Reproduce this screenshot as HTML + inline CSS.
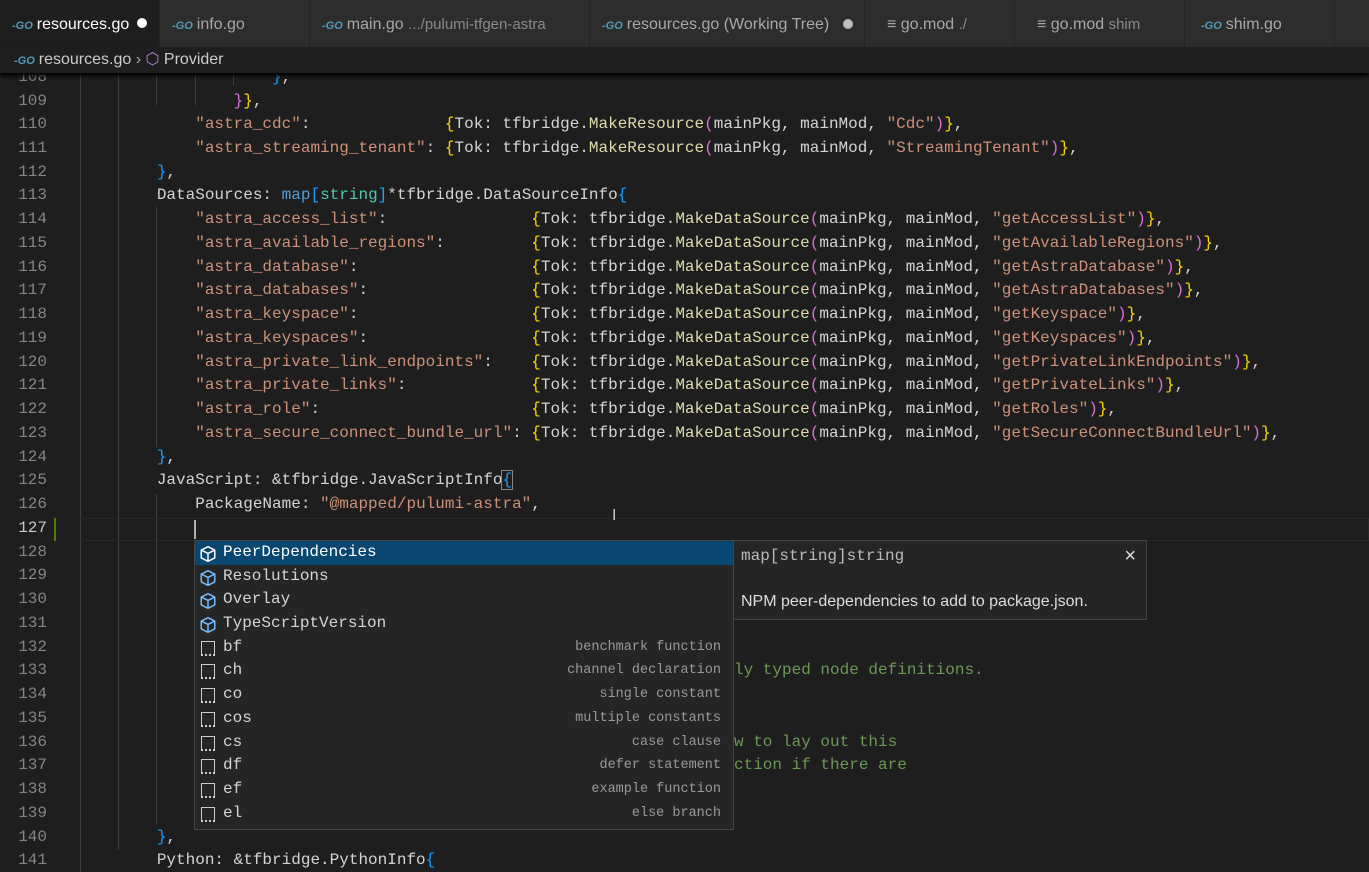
<!DOCTYPE html>
<html><head><meta charset="utf-8"><style>
*{margin:0;padding:0;box-sizing:border-box}
body{width:1369px;height:872px;background:#1e1e1e;overflow:hidden;position:relative;font-family:"Liberation Sans",sans-serif}
.tabs{position:absolute;left:0;top:0;width:1369px;height:47px;background:#252526}
.tab{position:absolute;top:0;height:47px;background:#2d2d2d;border-right:1px solid #252526;color:#a8a8a8;font-size:16px;line-height:50px;padding-left:12px;white-space:nowrap}
.tab.act{background:#1e1e1e;color:#fff}
.go{color:#519aba;font-weight:bold;font-size:11px;font-style:italic;margin-right:4px}
.dim{color:#8a8a8a;font-size:15px}
.bc{position:absolute;left:0;top:47px;width:1369px;height:26px;background:#1e1e1e;color:#ccc;font-size:16px;line-height:26px;padding-left:14px;box-shadow:0 3px 4px #000;z-index:5}
.ln{position:absolute;left:0;width:47px;text-align:right;color:#858585;font-family:"Liberation Mono",monospace;font-size:16px;height:24px;line-height:24px}
.l{position:absolute;left:80px;white-space:pre;color:#d4d4d4;font-family:"Liberation Mono",monospace;font-size:16px;height:24px;line-height:24px;letter-spacing:0}
.s{color:#ce9178}.f{color:#dcdcaa}.k{color:#569cd6}.t{color:#4ec9b0}.c{color:#6a9955}
.b1{color:#ffd700}.b2{color:#da70d6}.b3{color:#179fff}
.g{position:absolute;width:1px;background:#404040}
.sug{position:absolute;left:194px;top:540px;width:540px;height:290px;background:#252526;border:1px solid #454545;z-index:6;font-family:"Liberation Mono",monospace;font-size:16px;color:#d4d4d4}
.row{height:23.7px;line-height:23.7px;position:relative;padding-left:28px}
.row.sel{background:#094771;color:#fff}
.row .d{position:absolute;right:12px;top:0;font-size:13.5px;color:#999}
.ic{position:absolute;left:4px;top:4px}
.sq{position:absolute;left:6px;top:5px;width:14px;height:15px;border:1px solid #ccc;border-bottom:2px dotted #ccc}
.det{position:absolute;left:733px;top:540px;width:414px;height:80px;background:#252526;border:1px solid #454545;z-index:6;color:#ccc}
</style></head><body>
<div class="tabs">
<div class="tab act" style="left:0;width:160px"><span class="go">-GO</span>resources.go <span style="position:absolute;left:137px;top:18px;width:10px;height:10px;border-radius:5px;background:#fff"></span></div>
<div class="tab" style="left:160px;width:150px"><span class="go">-GO</span>info.go</div>
<div class="tab" style="left:310px;width:280px"><span class="go">-GO</span>main.go <span class="dim">.../pulumi-tfgen-astra</span></div>
<div class="tab" style="left:590px;width:275px"><span class="go">-GO</span>resources.go (Working Tree) <span style="position:absolute;left:253px;top:19px;width:10px;height:10px;border-radius:5px;background:#bbb"></span></div>
<div class="tab" style="left:865px;width:150px;padding-left:22px">≡ go.mod <span class="dim">./</span></div>
<div class="tab" style="left:1015px;width:170px;padding-left:22px">≡ go.mod <span class="dim">shim</span></div>
<div class="tab" style="left:1185px;width:150px;padding-left:16px"><span class="go">-GO</span>shim.go</div>
<div class="tab" style="left:1335px;width:40px"></div>
</div>
<div class="bc"><span class="go">-GO</span>resources.go <span style="color:#aaa">›</span> <span style="color:#b180d7">⬡</span> Provider</div>

<div class="g" style="left:80px;top:65px;height:807px"></div>
<div class="g" style="left:118px;top:65px;height:785px"></div>
<div class="g" style="left:156px;top:65px;height:40px"></div>
<div class="g" style="left:195px;top:65px;height:40px"></div>
<div class="g" style="left:233px;top:65px;height:20px"></div>
<div class="g" style="left:156px;top:207px;height:240px"></div>
<div class="g" style="left:156px;top:494px;height:330px"></div>
<div style="position:absolute;left:80px;top:518px;width:1289px;height:23px;border:1px solid #282828;border-left:none"></div>
<div style="position:absolute;left:54px;top:518px;width:2px;height:23px;background:#587c0c"></div>
<div style="position:absolute;left:194px;top:520px;width:2px;height:19px;background:#aeafad"></div>
<div style="position:absolute;left:612px;top:507px;color:#ccc;font-size:16px">I</div>

<div class="ln" style="top:65px">108</div><div class="l" style="top:65px">                    <span class="b3">}</span>,</div>
<div class="ln" style="top:89px">109</div><div class="l" style="top:89px">                <span class="b2">}</span><span class="b1">}</span>,</div>
<div class="ln" style="top:112px">110</div><div class="l" style="top:112px">            <span class="s">"astra_cdc"</span>:              <span class="b1">{</span>Tok: tfbridge.<span class="f">MakeResource</span><span class="b2">(</span>mainPkg, mainMod, <span class="s">"Cdc"</span><span class="b2">)</span><span class="b1">}</span>,</div>
<div class="ln" style="top:136px">111</div><div class="l" style="top:136px">            <span class="s">"astra_streaming_tenant"</span>: <span class="b1">{</span>Tok: tfbridge.<span class="f">MakeResource</span><span class="b2">(</span>mainPkg, mainMod, <span class="s">"StreamingTenant"</span><span class="b2">)</span><span class="b1">}</span>,</div>
<div class="ln" style="top:160px">112</div><div class="l" style="top:160px">        <span class="b3">}</span>,</div>
<div class="ln" style="top:183px">113</div><div class="l" style="top:183px">        DataSources: <span class="k">map</span><span class="b3">[</span><span class="t">string</span><span class="b3">]</span>*tfbridge.DataSourceInfo<span class="b3">{</span></div>
<div class="ln" style="top:207px">114</div><div class="l" style="top:207px">            <span class="s">"astra_access_list"</span>:               <span class="b1">{</span>Tok: tfbridge.<span class="f">MakeDataSource</span><span class="b2">(</span>mainPkg, mainMod, <span class="s">"getAccessList"</span><span class="b2">)</span><span class="b1">}</span>,</div>
<div class="ln" style="top:231px">115</div><div class="l" style="top:231px">            <span class="s">"astra_available_regions"</span>:         <span class="b1">{</span>Tok: tfbridge.<span class="f">MakeDataSource</span><span class="b2">(</span>mainPkg, mainMod, <span class="s">"getAvailableRegions"</span><span class="b2">)</span><span class="b1">}</span>,</div>
<div class="ln" style="top:255px">116</div><div class="l" style="top:255px">            <span class="s">"astra_database"</span>:                  <span class="b1">{</span>Tok: tfbridge.<span class="f">MakeDataSource</span><span class="b2">(</span>mainPkg, mainMod, <span class="s">"getAstraDatabase"</span><span class="b2">)</span><span class="b1">}</span>,</div>
<div class="ln" style="top:278px">117</div><div class="l" style="top:278px">            <span class="s">"astra_databases"</span>:                 <span class="b1">{</span>Tok: tfbridge.<span class="f">MakeDataSource</span><span class="b2">(</span>mainPkg, mainMod, <span class="s">"getAstraDatabases"</span><span class="b2">)</span><span class="b1">}</span>,</div>
<div class="ln" style="top:302px">118</div><div class="l" style="top:302px">            <span class="s">"astra_keyspace"</span>:                  <span class="b1">{</span>Tok: tfbridge.<span class="f">MakeDataSource</span><span class="b2">(</span>mainPkg, mainMod, <span class="s">"getKeyspace"</span><span class="b2">)</span><span class="b1">}</span>,</div>
<div class="ln" style="top:326px">119</div><div class="l" style="top:326px">            <span class="s">"astra_keyspaces"</span>:                 <span class="b1">{</span>Tok: tfbridge.<span class="f">MakeDataSource</span><span class="b2">(</span>mainPkg, mainMod, <span class="s">"getKeyspaces"</span><span class="b2">)</span><span class="b1">}</span>,</div>
<div class="ln" style="top:350px">120</div><div class="l" style="top:350px">            <span class="s">"astra_private_link_endpoints"</span>:    <span class="b1">{</span>Tok: tfbridge.<span class="f">MakeDataSource</span><span class="b2">(</span>mainPkg, mainMod, <span class="s">"getPrivateLinkEndpoints"</span><span class="b2">)</span><span class="b1">}</span>,</div>
<div class="ln" style="top:373px">121</div><div class="l" style="top:373px">            <span class="s">"astra_private_links"</span>:             <span class="b1">{</span>Tok: tfbridge.<span class="f">MakeDataSource</span><span class="b2">(</span>mainPkg, mainMod, <span class="s">"getPrivateLinks"</span><span class="b2">)</span><span class="b1">}</span>,</div>
<div class="ln" style="top:397px">122</div><div class="l" style="top:397px">            <span class="s">"astra_role"</span>:                      <span class="b1">{</span>Tok: tfbridge.<span class="f">MakeDataSource</span><span class="b2">(</span>mainPkg, mainMod, <span class="s">"getRoles"</span><span class="b2">)</span><span class="b1">}</span>,</div>
<div class="ln" style="top:421px">123</div><div class="l" style="top:421px">            <span class="s">"astra_secure_connect_bundle_url"</span>: <span class="b1">{</span>Tok: tfbridge.<span class="f">MakeDataSource</span><span class="b2">(</span>mainPkg, mainMod, <span class="s">"getSecureConnectBundleUrl"</span><span class="b2">)</span><span class="b1">}</span>,</div>
<div class="ln" style="top:445px">124</div><div class="l" style="top:445px">        <span class="b3">}</span>,</div>
<div class="ln" style="top:468px">125</div><div class="l" style="top:468px">        JavaScript: &amp;tfbridge.JavaScriptInfo<span class="b3" style="outline:1px solid #888">{</span></div>
<div class="ln" style="top:492px">126</div><div class="l" style="top:492px">            PackageName: <span class="s">"@mapped/pulumi-astra"</span>,</div>
<div class="ln" style="top:516px;color:#c6c6c6">127</div>
<div class="ln" style="top:540px">128</div><div class="ln" style="top:563px">129</div><div class="ln" style="top:587px">130</div><div class="ln" style="top:611px">131</div><div class="ln" style="top:635px">132</div><div class="ln" style="top:658px">133</div><div class="ln" style="top:682px">134</div><div class="ln" style="top:706px">135</div><div class="ln" style="top:730px">136</div><div class="ln" style="top:753px">137</div><div class="ln" style="top:777px">138</div><div class="ln" style="top:801px">139</div><div class="ln" style="top:825px">140</div><div class="ln" style="top:848px">141</div>
<div class="l c" style="top:658px;left:734px">ly typed node definitions.</div>
<div class="l c" style="top:730px;left:734px">w to lay out this</div>
<div class="l c" style="top:753px;left:734px">ction if there are</div>
<div class="l" style="top:825px">        <span class="b3">}</span>,</div>
<div class="l" style="top:848px">        Python: &amp;tfbridge.PythonInfo<span class="b3">{</span></div>

<div class="sug">
<div class="row sel"><svg class="ic" width="18" height="18" viewBox="0 0 16 16" fill="none" stroke="#fff" stroke-width="1.3"><path d="M8 1.5l6 3v7l-6 3-6-3v-7z M2 4.5l6 3 6-3 M8 7.5v7"/></svg>PeerDependencies</div>
<div class="row"><svg class="ic" width="18" height="18" viewBox="0 0 16 16" fill="none" stroke="#75beff" stroke-width="1.3"><path d="M8 1.5l6 3v7l-6 3-6-3v-7z M2 4.5l6 3 6-3 M8 7.5v7"/></svg>Resolutions</div>
<div class="row"><svg class="ic" width="18" height="18" viewBox="0 0 16 16" fill="none" stroke="#75beff" stroke-width="1.3"><path d="M8 1.5l6 3v7l-6 3-6-3v-7z M2 4.5l6 3 6-3 M8 7.5v7"/></svg>Overlay</div>
<div class="row"><svg class="ic" width="18" height="18" viewBox="0 0 16 16" fill="none" stroke="#75beff" stroke-width="1.3"><path d="M8 1.5l6 3v7l-6 3-6-3v-7z M2 4.5l6 3 6-3 M8 7.5v7"/></svg>TypeScriptVersion</div>
<div class="row"><span class="sq"></span>bf<span class="d">benchmark function</span></div>
<div class="row"><span class="sq"></span>ch<span class="d">channel declaration</span></div>
<div class="row"><span class="sq"></span>co<span class="d">single constant</span></div>
<div class="row"><span class="sq"></span>cos<span class="d">multiple constants</span></div>
<div class="row"><span class="sq"></span>cs<span class="d">case clause</span></div>
<div class="row"><span class="sq"></span>df<span class="d">defer statement</span></div>
<div class="row"><span class="sq"></span>ef<span class="d">example function</span></div>
<div class="row"><span class="sq"></span>el<span class="d">else branch</span></div>
</div>
<div class="det">
<div style="position:absolute;left:7px;top:6px;font-family:'Liberation Mono',monospace;font-size:16px;color:#bbb">map[string]string</div>
<div style="position:absolute;right:10px;top:4px;font-size:20px;color:#ddd">×</div>
<div style="position:absolute;left:7px;top:52px;font-size:16px;color:#ddd">NPM peer-dependencies to add to package.json.</div>
</div>
</body></html>
